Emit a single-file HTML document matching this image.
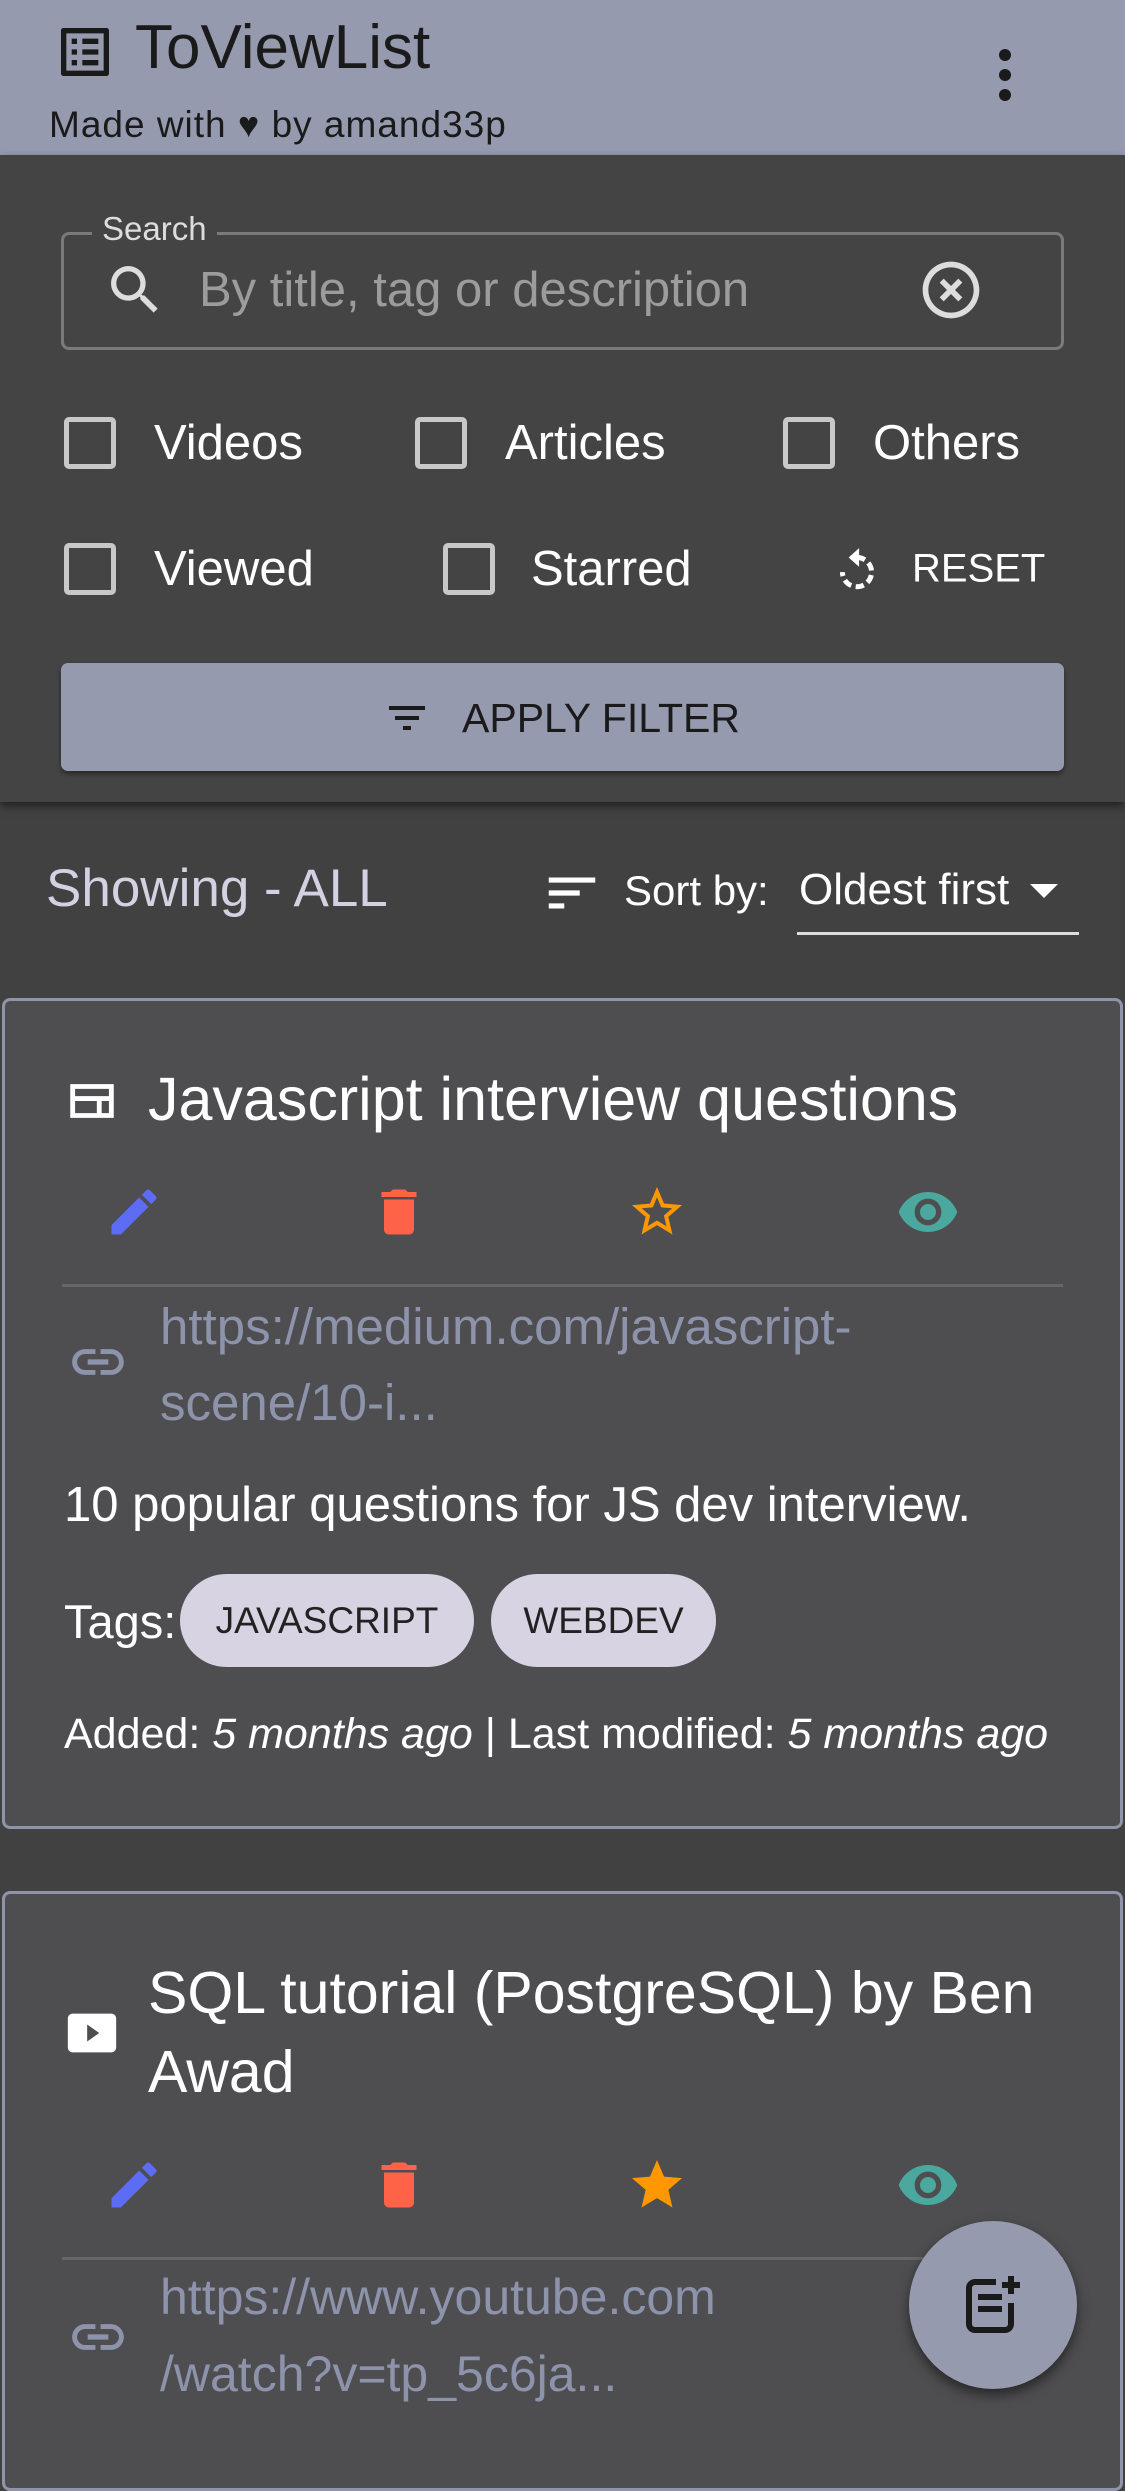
<!DOCTYPE html>
<html><head><meta charset="utf-8"><style>
*{margin:0;padding:0;box-sizing:border-box}
body{width:1125px;height:2436px;background:#414141;font-family:"Liberation Sans",sans-serif;position:relative;overflow:hidden}
.a{position:absolute;white-space:nowrap}
.hdr{left:0;top:0;width:1125px;height:155px;background:#959aae;box-shadow:0 3px 6px rgba(0,0,0,.5)}
.panel{left:0;top:155px;width:1125px;height:647px;background:#444;box-shadow:0 4px 8px rgba(0,0,0,.5)}
.cb{width:52px;height:52px;border:5px solid #c8c8c8;border-radius:5px}
.lbl{font-size:49px;color:#fff;transform:translateY(-50%)}
.card{left:2px;width:1121px;background:#4e4e50;border:3px solid #8f94aa;border-radius:8px}
.chip{background:#d8d3e3;color:#222;font-size:37px;border-radius:47px;height:93px;line-height:93px;text-align:center}
</style></head><body>
<div class="a hdr"></div>
<svg class="a" style="left:53px;top:20px" width="64" height="64" viewBox="0 0 24 24"><path fill="#1a1a1a" d="M19 5v14H5V5h14m1.1-2H3.9c-.5 0-.9.4-.9.9v16.2c0 .4.4.9.9.9h16.2c.4 0 .9-.5.9-.9V3.9c0-.5-.5-.9-.9-.9zM11 7h6v2h-6V7zm0 4h6v2h-6v-2zm0 4h6v2h-6zM7 7h2v2H7zm0 4h2v2H7zm0 4h2v2H7z"/></svg>
<div class="a" style="left:135px;top:12px;font-size:62px;color:#1a1a1a">ToViewList</div>
<div class="a" style="left:49px;top:104px;font-size:37px;letter-spacing:1px;color:#1a1a1a">Made with <span style="font-size:36px">♥</span> by amand33p</div>
<svg class="a" style="left:985px;top:45px" width="40" height="60" viewBox="0 0 40 60"><circle cx="20" cy="10" r="6" fill="#1a1a1a"/><circle cx="20" cy="30" r="6" fill="#1a1a1a"/><circle cx="20" cy="50" r="6" fill="#1a1a1a"/></svg>
<div class="a panel"></div>
<div class="a" style="left:61px;top:232px;width:1003px;height:118px;border:3px solid #7a7a7a;border-radius:8px"></div>
<div class="a" style="left:92px;top:210px;padding:0 10px;background:#444;font-size:33px;color:#ddd">Search</div>
<svg class="a" style="left:103px;top:258px" width="64" height="64" viewBox="0 0 24 24"><path fill="#ddd" d="M15.5 14h-.79l-.28-.27A6.47 6.47 0 0016 9.5 6.5 6.5 0 109.5 16c1.61 0 3.09-.59 4.23-1.57l.27.28v.79l5 4.99L20.49 19l-4.99-5zm-6 0C7.01 14 5 11.99 5 9.5S7.01 5 9.5 5 14 7.01 14 9.5 11.99 14 9.5 14z"/></svg>
<div class="a" style="left:199px;top:262px;font-size:49px;color:#9c9c9c">By title, tag or description</div>
<svg class="a" style="left:917px;top:256px" width="68" height="68" viewBox="0 0 24 24"><path fill="#ddd" d="M14.59 8L12 10.59 9.41 8 8 9.41 10.59 12 8 14.59 9.41 16 12 13.41 14.59 16 16 14.59 13.41 12 16 9.41 14.59 8zM12 2C6.47 2 2 6.47 2 12s4.47 10 10 10 10-4.47 10-10S17.53 2 12 2zm0 18c-4.41 0-8-3.59-8-8s3.59-8 8-8 8 3.59 8 8-3.59 8-8 8z"/></svg>
<div class="a cb" style="left:64px;top:417px"></div><div class="a lbl" style="left:154px;top:443px">Videos</div>
<div class="a cb" style="left:415px;top:417px"></div><div class="a lbl" style="left:505px;top:443px">Articles</div>
<div class="a cb" style="left:783px;top:417px"></div><div class="a lbl" style="left:873px;top:443px">Others</div>
<div class="a cb" style="left:64px;top:543px"></div><div class="a lbl" style="left:154px;top:569px">Viewed</div>
<div class="a cb" style="left:443px;top:543px"></div><div class="a lbl" style="left:531px;top:569px">Starred</div>
<svg class="a" style="left:832px;top:544px" width="50" height="50" viewBox="0 0 24 24"><path fill="none" stroke="#fff" stroke-width="2.4" stroke-dasharray="4 2.2" d="M12 6.5a7 7 0 1 1-7 7"/><path fill="#fff" d="M13 2v9l-5-4.5z"/></svg>
<div class="a lbl" style="left:912px;top:569px;font-size:40px">RESET</div>
<div class="a" style="left:61px;top:663px;width:1003px;height:108px;background:#959aae;border-radius:7px;box-shadow:0 3px 5px rgba(0,0,0,.4)"></div>
<svg class="a" style="left:383px;top:694px" width="48" height="48" viewBox="0 0 24 24"><path fill="#1a1a1a" d="M10 18h4v-2h-4v2zM3 6v2h18V6H3zm3 7h12v-2H6v2z"/></svg>
<div class="a" style="left:462px;top:695px;font-size:41px;color:#1a1a1a">APPLY FILTER</div>
<div class="a" style="left:46px;top:858px;font-size:53px;color:#d4d2e2">Showing - ALL</div>
<svg class="a" style="left:541px;top:862px" width="62" height="62" viewBox="0 0 24 24"><path fill="#fff" d="M3 18h6v-2H3v2zM3 6v2h18V6H3zm0 7h12v-2H3v2z"/></svg>
<div class="a" style="left:624px;top:867px;font-size:42px;color:#fff">Sort by:</div>
<div class="a" style="left:799px;top:865px;font-size:44px;color:#fff">Oldest first</div>
<svg class="a" style="left:1026px;top:876px" width="36" height="30" viewBox="0 0 36 30"><path fill="#fff" d="M4 8h28L18 22z"/></svg>
<div class="a" style="left:797px;top:932px;width:282px;height:3px;background:#ddd"></div>

<div class="a card" style="top:998px;height:831px"></div>
<svg class="a" style="left:63px;top:1072px" width="58" height="58" viewBox="0 0 24 24"><path fill="#fff" d="M3 5v14h18V5H3zm16 2v3H5V7h14zM5 17v-5h9v5H5zm11 0v-5h3v5h-3z"/></svg>
<div class="a" style="left:148px;top:1064px;font-size:61px;color:#fff">Javascript interview questions</div>
<svg class="a" style="left:104px;top:1182px" width="60" height="60" viewBox="0 0 24 24"><path fill="#5c6cf5" d="M3 17.25V21h3.75L17.81 9.94l-3.75-3.75L3 17.25zM20.71 7.04a1 1 0 000-1.41l-2.34-2.34a1 1 0 00-1.41 0l-1.83 1.83 3.75 3.75 1.83-1.83z"/></svg>
<svg class="a" style="left:369px;top:1182px" width="60" height="60" viewBox="0 0 24 24"><path fill="#ff6347" d="M6 19c0 1.1.9 2 2 2h8c1.1 0 2-.9 2-2V7H6v12zM19 4h-3.5l-1-1h-5l-1 1H5v2h14V4z"/></svg>
<svg class="a" style="left:627px;top:1182px" width="60" height="60" viewBox="0 0 24 24"><path fill="#ff9800" d="M22 9.24l-7.19-.62L12 2 9.19 8.63 2 9.24l5.46 4.73L5.82 21 12 17.27 18.18 21l-1.63-7.03L22 9.24zM12 15.4l-3.76 2.27 1-4.28-3.32-2.88 4.38-.38L12 6.1l1.71 4.04 4.38.38-3.32 2.88 1 4.28L12 15.4z"/></svg>
<svg class="a" style="left:896px;top:1180px" width="64" height="64" viewBox="0 0 24 24"><path fill="#4ba89e" d="M12 4.5C7 4.5 2.730 7.61 1 12c1.73 4.39 6 7.5 11 7.5s9.27-3.11 11-7.5c-1.73-4.39-6-7.5-11-7.5zM12 17c-2.76 0-5-2.24-5-5s2.24-5 5-5 5 2.24 5 5-2.24 5-5 5zm0-8c-1.66 0-3 1.34-3 3s1.34 3 3 3 3-1.34 3-3-1.34-3-3-3z"/></svg>
<div class="a" style="left:62px;top:1284px;width:1001px;height:3px;background:#666"></div>
<svg class="a" style="left:67px;top:1331px" width="62" height="62" viewBox="0 0 24 24"><path fill="#8e93ac" d="M3.9 12c0-1.71 1.39-3.1 3.1-3.1h4V7H7c-2.76 0-5 2.24-5 5s2.24 5 5 5h4v-1.9H7c-1.71 0-3.1-1.39-3.1-3.1zM8 13h8v-2H8v2zm9-6h-4v1.9h4c1.71 0 3.1 1.39 3.1 3.1s-1.39 3.1-3.1 3.1h-4V17h4c2.76 0 5-2.24 5-5s-2.24-5-5-5z"/></svg>
<div class="a" style="left:160px;top:1289px;font-size:51px;color:#8e93ac;line-height:76px">https://medium.com/javascript-<br>scene/10-i...</div>
<div class="a" style="left:64px;top:1477px;font-size:49px;color:#fff">10 popular questions for JS dev interview.</div>
<div class="a" style="left:64px;top:1594px;font-size:47px;color:#fff">Tags:</div>
<div class="a chip" style="left:180px;top:1574px;width:294px">JAVASCRIPT</div>
<div class="a chip" style="left:491px;top:1574px;width:225px">WEBDEV</div>
<div class="a" style="left:64px;top:1710px;font-size:43px;color:#fff">Added: <i>5 months ago</i> | Last modified: <i>5 months ago</i></div>

<div class="a card" style="top:1891px;height:600px"></div>
<svg class="a" style="left:63px;top:2004px" width="58" height="58" viewBox="0 0 24 24"><path fill="#fff" d="M4 4h16c1.1 0 2 .9 2 2v12c0 1.1-.9 2-2 2H4c-1.1 0-2-.9-2-2V6c0-1.1.9-2 2-2zm6 4.5v7l5-3.5z"/></svg>
<div class="a" style="left:148px;top:1954px;font-size:59px;color:#fff;line-height:79px">SQL tutorial (PostgreSQL) by Ben<br>Awad</div>
<svg class="a" style="left:104px;top:2155px" width="60" height="60" viewBox="0 0 24 24"><path fill="#5c6cf5" d="M3 17.25V21h3.75L17.81 9.94l-3.75-3.75L3 17.25zM20.71 7.04a1 1 0 000-1.41l-2.34-2.34a1 1 0 00-1.41 0l-1.83 1.83 3.75 3.75 1.83-1.83z"/></svg>
<svg class="a" style="left:369px;top:2155px" width="60" height="60" viewBox="0 0 24 24"><path fill="#ff6347" d="M6 19c0 1.1.9 2 2 2h8c1.1 0 2-.9 2-2V7H6v12zM19 4h-3.5l-1-1h-5l-1 1H5v2h14V4z"/></svg>
<svg class="a" style="left:627px;top:2155px" width="60" height="60" viewBox="0 0 24 24"><path fill="#ff9800" d="M12 17.27L18.18 21l-1.64-7.03L22 9.24l-7.19-.61L12 2 9.190 8.63 2 9.24l5.46 4.73L5.82 21z"/></svg>
<svg class="a" style="left:896px;top:2153px" width="64" height="64" viewBox="0 0 24 24"><path fill="#4ba89e" d="M12 4.5C7 4.5 2.73 7.61 1 12c1.73 4.39 6 7.5 11 7.5s9.27-3.11 11-7.5c-1.73-4.39-6-7.5-11-7.5zM12 17c-2.76 0-5-2.24-5-5s2.24-5 5-5 5 2.24 5 5-2.24 5-5 5zm0-8c-1.66 0-3 1.34-3 3s1.34 3 3 3 3-1.34 3-3-1.34-3-3-3z"/></svg>
<div class="a" style="left:62px;top:2257px;width:1001px;height:3px;background:#666"></div>
<svg class="a" style="left:67px;top:2306px" width="62" height="62" viewBox="0 0 24 24"><path fill="#8e93ac" d="M3.9 12c0-1.71 1.39-3.1 3.1-3.1h4V7H7c-2.76 0-5 2.24-5 5s2.240 5 5 5h4v-1.9H7c-1.71 0-3.1-1.39-3.1-3.1zM8 13h8v-2H8v2zm9-6h-4v1.9h4c1.71 0 3.1 1.39 3.1 3.1s-1.39 3.1-3.1 3.1h-4V17h4c2.76 0 5-2.24 5-5s-2.24-5-5-5z"/></svg>
<div class="a" style="left:160px;top:2259px;font-size:50px;color:#8e93ac;line-height:77px">https://www.youtube.com<br>/watch?v=tp_5c6ja...</div>
<div class="a" style="left:909px;top:2221px;width:168px;height:168px;border-radius:50%;background:#959aae;box-shadow:0 6px 12px rgba(0,0,0,.5)"></div>
<svg class="a" style="left:957px;top:2267px" width="72" height="72" viewBox="0 0 24 24"><path fill="#1a1a1a" d="M19 3h-2v2h-2v2h2v2h2V7h2V5h-2zM15 11H7V9h8v2zm0 4H7v-2h8v2zm2-3v7c0 .55-.45 1-1 1H6c-.55 0-1-.45-1-1V7c0-.55.45-1 1-1h7V4H6C4.35 4 3 5.350 3 7v12c0 1.65 1.35 3 3 3h10c1.65 0 3-1.35 3-3v-7h-2z"/></svg>
</body></html>
